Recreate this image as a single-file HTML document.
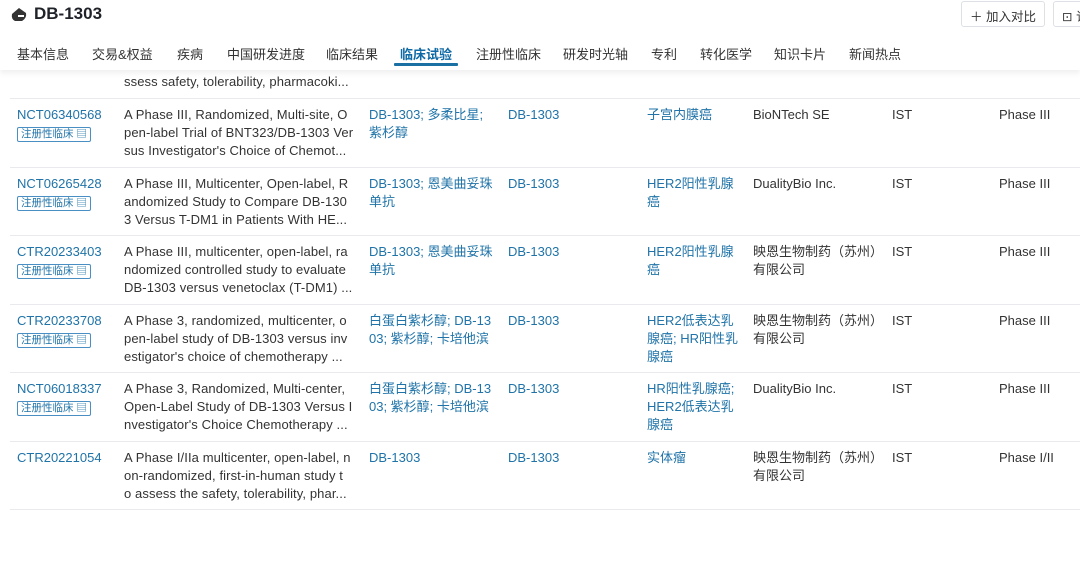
<!DOCTYPE html>
<html><head><meta charset="utf-8"><style>
*{margin:0;padding:0;box-sizing:border-box}
body{width:1080px;height:511px;overflow:hidden;background:#fff;font-family:"Liberation Sans","Noto Sans CJK SC",sans-serif;font-size:13px;color:#333;position:relative}
.hdr{position:absolute;left:0;top:0;width:1080px;height:70px;background:#fff;box-shadow:0 3px 6px rgba(0,0,0,.07);z-index:2}
.title{position:absolute;left:11px;top:4px;font-size:17px;font-weight:bold;color:#1f2329;display:flex;align-items:center;gap:6px}
.btn{position:absolute;top:1px;height:26px;border:1px solid #dde0e5;border-radius:3px;font-size:12.5px;color:#333;padding:4px 8px;background:#fff;white-space:nowrap;overflow:hidden}
.tabs{position:absolute;top:44px;left:0;font-size:13px;color:#333;white-space:nowrap}
.tabs span{position:absolute;top:0}
.tabs .act{color:#0f6aa5;font-weight:bold}
.ul{position:absolute;left:394px;top:63px;width:64px;height:3px;background:#1a6fa3;border-radius:1px}
.row{position:absolute;left:10px;width:1070px;border-top:1px solid #e8eaee;height:69px}
.c{position:absolute;top:7px;line-height:18px;white-space:nowrap}
.l{color:#1f73a8}
.tag{position:absolute;left:7px;top:28px;border:1px solid #4a8fc4;border-radius:2px;color:#1f73a8;font-size:10.5px;line-height:13px;padding:0 3px;white-space:nowrap}
.t{color:#333;letter-spacing:0.1px}
</style></head><body>
<div class="hdr">
 <div class="title"><svg width="17" height="15" viewBox="0 0 17 15"><path d="M8 1 L15 6 Q16 11 11 14 L4 14 Q0 12 1 7 Z" fill="#333"/><path d="M7 8 L13 8 L13 10 L7 10Z" fill="#fff"/></svg>DB-1303</div>
 <div class="btn" style="left:961px">＋ 加入对比</div>
 <div class="btn" style="left:1053px;width:40px">⊡ 订</div>
 <div class="tabs">
  <span style="left:17px">基本信息</span><span style="left:92px">交易&amp;权益</span><span style="left:177px">疾病</span><span style="left:227px">中国研发进度</span><span style="left:326px">临床结果</span><span class="act" style="left:400px">临床试验</span><span style="left:476px">注册性临床</span><span style="left:563px">研发时光轴</span><span style="left:651px">专利</span><span style="left:700px">转化医学</span><span style="left:774px">知识卡片</span><span style="left:849px">新闻热点</span>
 </div>
 <div class="ul"></div>
</div>
<div class="c t" style="left:124px;top:73px;z-index:1">ssess safety, tolerability, pharmacoki...</div>

<div class="row" style="top:98px">
 <div class="c l" style="left:7px">NCT06340568</div><div class="tag">注册性临床 ▤</div>
 <div class="c t" style="left:114px">A Phase III, Randomized, Multi-site, O<br>pen-label Trial of BNT323/DB-1303 Ver<br>sus Investigator's Choice of Chemot...</div>
 <div class="c l" style="left:359px">DB-1303; 多柔比星;<br>紫杉醇</div>
 <div class="c l" style="left:498px">DB-1303</div>
 <div class="c l" style="left:637px">子宫内膜癌</div>
 <div class="c" style="left:743px">BioNTech SE</div>
 <div class="c" style="left:882px">IST</div>
 <div class="c" style="left:989px">Phase III</div>
</div>
<div class="row" style="top:166.5px">
 <div class="c l" style="left:7px">NCT06265428</div><div class="tag">注册性临床 ▤</div>
 <div class="c t" style="left:114px">A Phase III, Multicenter, Open-label, R<br>andomized Study to Compare DB-130<br>3 Versus T-DM1 in Patients With HE...</div>
 <div class="c l" style="left:359px">DB-1303; 恩美曲妥珠<br>单抗</div>
 <div class="c l" style="left:498px">DB-1303</div>
 <div class="c l" style="left:637px">HER2阳性乳腺<br>癌</div>
 <div class="c" style="left:743px">DualityBio Inc.</div>
 <div class="c" style="left:882px">IST</div>
 <div class="c" style="left:989px">Phase III</div>
</div>
<div class="row" style="top:235px">
 <div class="c l" style="left:7px">CTR20233403</div><div class="tag">注册性临床 ▤</div>
 <div class="c t" style="left:114px">A Phase III, multicenter, open-label, ra<br>ndomized controlled study to evaluate<br>DB-1303 versus venetoclax (T-DM1) ...</div>
 <div class="c l" style="left:359px">DB-1303; 恩美曲妥珠<br>单抗</div>
 <div class="c l" style="left:498px">DB-1303</div>
 <div class="c l" style="left:637px">HER2阳性乳腺<br>癌</div>
 <div class="c" style="left:743px">映恩生物制药（苏州）<br>有限公司</div>
 <div class="c" style="left:882px">IST</div>
 <div class="c" style="left:989px">Phase III</div>
</div>
<div class="row" style="top:303.5px">
 <div class="c l" style="left:7px">CTR20233708</div><div class="tag">注册性临床 ▤</div>
 <div class="c t" style="left:114px">A Phase 3, randomized, multicenter, o<br>pen-label study of DB-1303 versus inv<br>estigator's choice of chemotherapy ...</div>
 <div class="c l" style="left:359px">白蛋白紫杉醇; DB-13<br>03; 紫杉醇; 卡培他滨</div>
 <div class="c l" style="left:498px">DB-1303</div>
 <div class="c l" style="left:637px">HER2低表达乳<br>腺癌; HR阳性乳<br>腺癌</div>
 <div class="c" style="left:743px">映恩生物制药（苏州）<br>有限公司</div>
 <div class="c" style="left:882px">IST</div>
 <div class="c" style="left:989px">Phase III</div>
</div>
<div class="row" style="top:372px">
 <div class="c l" style="left:7px">NCT06018337</div><div class="tag">注册性临床 ▤</div>
 <div class="c t" style="left:114px">A Phase 3, Randomized, Multi-center,<br>Open-Label Study of DB-1303 Versus I<br>nvestigator's Choice Chemotherapy ...</div>
 <div class="c l" style="left:359px">白蛋白紫杉醇; DB-13<br>03; 紫杉醇; 卡培他滨</div>
 <div class="c l" style="left:498px">DB-1303</div>
 <div class="c l" style="left:637px">HR阳性乳腺癌;<br>HER2低表达乳<br>腺癌</div>
 <div class="c" style="left:743px">DualityBio Inc.</div>
 <div class="c" style="left:882px">IST</div>
 <div class="c" style="left:989px">Phase III</div>
</div>
<div class="row" style="top:440.5px">
 <div class="c l" style="left:7px">CTR20221054</div>
 <div class="c t" style="left:114px">A Phase I/IIa multicenter, open-label, n<br>on-randomized, first-in-human study t<br>o assess the safety, tolerability, phar...</div>
 <div class="c l" style="left:359px">DB-1303</div>
 <div class="c l" style="left:498px">DB-1303</div>
 <div class="c l" style="left:637px">实体瘤</div>
 <div class="c" style="left:743px">映恩生物制药（苏州）<br>有限公司</div>
 <div class="c" style="left:882px">IST</div>
 <div class="c" style="left:989px">Phase I/II</div>
</div>
<div class="row" style="top:508.5px"></div>
</body></html>
